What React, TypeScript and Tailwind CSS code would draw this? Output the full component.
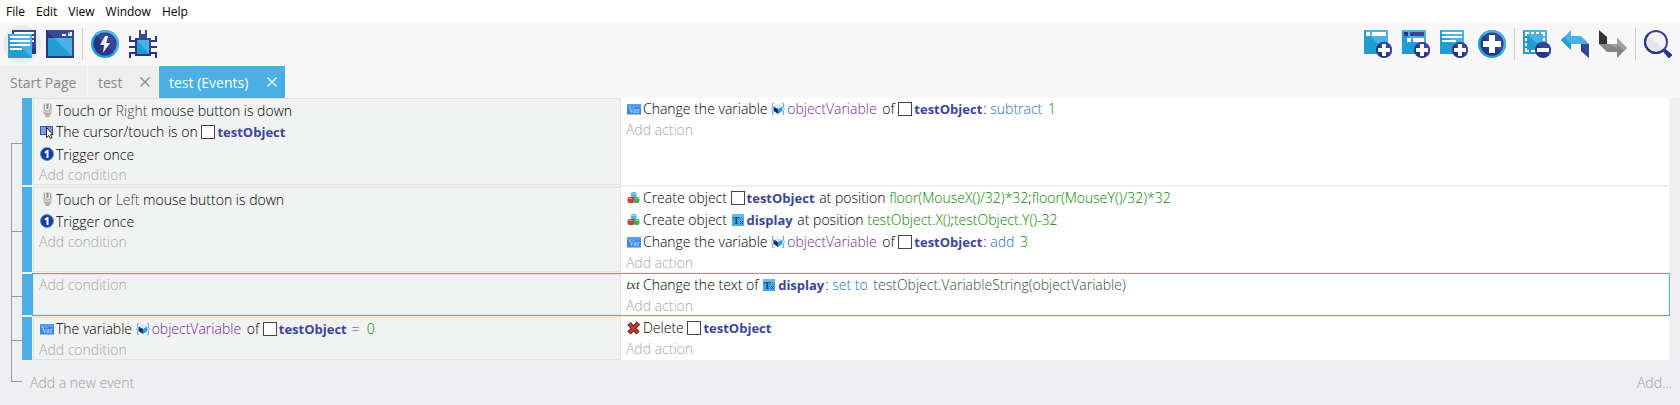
import type { ReactNode } from "react";

const LIGHT = "#4bb0e4";
const BLUE = "#219dd4";
const INDIGO = "#3c4698";
const NAVY = "#283583";

/* ---------- toolbar icons ---------- */

function Svg({ children }: { children: ReactNode }) {
  return (
    <svg width="28" height="28" viewBox="0 0 28 28" aria-hidden="true">
      {children}
    </svg>
  );
}

function Sheet() {
  return (
    <>
      <path d="M0 0h24v24H0z" fill={BLUE} />
      <path d="M0 0h24v24z" fill={LIGHT} />
    </>
  );
}

function Badge({ minus = false }: { minus?: boolean }) {
  return (
    <>
      <circle cx="20" cy="20" r="8" fill={NAVY} />
      <path d="M14.3 14.3A8 8 0 0 1 25.7 25.7z" fill={INDIGO} />
      <path d={minus ? "M14 18h12v4H14z" : "M18 14h4v4h4v4h-4v4h-4v-4h-4v-4h4z"} fill="#fff" />
    </>
  );
}

function Disc() {
  return (
    <>
      <circle cx="14" cy="14" r="14" fill={BLUE} />
      <path d="M4.1 4.1A14 14 0 0 1 23.9 23.9z" fill={LIGHT} />
      <circle cx="14" cy="14" r="11.5" fill={NAVY} />
      <path d="M5.9 5.9A11.5 11.5 0 0 1 22.1 22.1z" fill={INDIGO} />
    </>
  );
}

const EventsIcon = () => (
  <Svg>
    <path d="M4 0h24v24H4z" fill={INDIGO} />
    <path d="M24 20l4-4v8h-4z" fill={NAVY} />
    <path d="M6 2h20v2H6zM24 6h2v2h-2zM24 10h2v2h-2z" fill="#fff" />
    <path d="M0 4h24v24H0z" fill={BLUE} />
    <path d="M0 4h24v24z" fill={LIGHT} />
    <path d="M2 6h20v2H2zM2 10h20v2H2zM2 14h20v2H2zM2 18h12v2H2z" fill="#fff" />
  </Svg>
);

const SceneIcon = () => (
  <Svg>
    <path d="M0 0h28v28H0z" fill={NAVY} />
    <path d="M0 0h28v28z" fill={INDIGO} />
    <path d="M2 8h24v18H2z" fill={BLUE} />
    <path d="M8 8h18v18z" fill={LIGHT} />
    <path d="M16 4h4v2h-4zM22 2h4v4h-4z" fill="#fff" />
    <path d="M22 2h2v2h-2zM24 4h1v1h-1z" fill={LIGHT} />
  </Svg>
);

const BoltIcon = () => (
  <Svg>
    <Disc />
    <path d="M14 6l-5 9h4l-1 8 7-10h-4l2-7z" fill="#e8e8f0" />
    <path d="M14 6h3l-2 7h4l-4 5z" fill="#fff" />
  </Svg>
);

const BugIcon = () => (
  <Svg>
    <path d="M6 8h4V0h2v4h4V0h2v8h4v18H6z" fill={NAVY} />
    <path d="M10 8V0h2v4h4V0h2v8h4v14L8 8z" fill={INDIGO} />
    <path d="M1 6v5h5M0 17h6M1 28v-5h5M27 6v5h-5M28 17h-6M27 28v-5h-5" fill="none" stroke={NAVY} strokeWidth="2" />
    <path d="M8 10h12v14H8z" fill={BLUE} />
    <path d="M8 10h12v14z" fill={LIGHT} />
  </Svg>
);

const AddEventIcon = () => (
  <Svg>
    <Sheet />
    <path d="M2 2h4v4H2zM8 2h14v4H8z" fill="#fff" />
    <Badge />
  </Svg>
);

const AddSubEventIcon = () => (
  <Svg>
    <Sheet />
    <path d="M2 2h4v4H2z" fill={NAVY} />
    <path d="M8 2h14v4H8z" fill={INDIGO} />
    <path d="M5 8h4v4H5zM11 8h11v4H11z" fill="#fff" />
    <Badge />
  </Svg>
);

const AddCommentIcon = () => (
  <Svg>
    <Sheet />
    <path d="M2 2h20v2H2zM2 6h20v2H2zM2 10h14v2H2z" fill="#fff" />
    <Badge />
  </Svg>
);

const AddIcon = () => (
  <Svg>
    <Disc />
    <path d="M11 5h6v6h6v6h-6v6h-6v-6H5v-6h6z" fill="#fff" />
  </Svg>
);

const DeleteIcon = () => (
  <Svg>
    <Sheet />
    <path
      d="M2 2h4v2H4v2H2zM8 2h3v2H8zM13 2h3v2h-3zM18 2h4v4h-2V4h-2zM2 8h2v3H2zM2 13h2v3H2zM20 8h2v3h-2zM2 18h2v2h2v2H2zM8 20h4v2H8z"
      fill="#fff"
    />
    <Badge minus />
  </Svg>
);

const UndoIcon = () => (
  <Svg>
    <path d="M0 10L10 0v6h10l8 8H10v6z" fill={LIGHT} />
    <path d="M0 10l3-3 7 7v6z" fill={BLUE} />
    <path d="M20 14h8v14l-8-7z" fill={INDIGO} />
    <path d="M20 14l8 14-8-7z" fill={NAVY} opacity="0.4" />
  </Svg>
);

const RedoIcon = () => (
  <Svg>
    <path d="M0 0l8 7v7H0z" fill="#333" />
    <path d="M0 14h18V8l10 10-10 10v-6H8z" fill="#868686" />
    <path d="M10 14h8V8l10 10-3 3-7-7v4z" fill="#a0a0a0" />
  </Svg>
);

const SearchIcon = () => (
  <Svg>
    <path d="M18.5 20.5l2-2 7.5 6.5-3 3z" fill={NAVY} stroke={NAVY} />
    <circle cx="12" cy="12" r="11" fill="#e6e6ea" />
    <path d="M4.2 4.2A11 11 0 0 1 19.8 19.8z" fill="#f5f5f7" />
    <circle cx="12" cy="12" r="11" fill="none" stroke={INDIGO} strokeWidth="2" />
    <path d="M4.2 4.2A11 11 0 0 0 19.8 19.8" fill="none" stroke={NAVY} strokeWidth="2" />
  </Svg>
);

function ToolButton({ label, active = false, children }: { label: string; active?: boolean; children: ReactNode }) {
  return (
    <button
      type="button"
      aria-label={label}
      className={
        active
          ? "flex size-[38px] items-center justify-center rounded-full bg-[#ebebeb]"
          : "flex size-[38px] items-center justify-center rounded-full"
      }
    >
      {children}
    </button>
  );
}

const Divider = () => <div className="mx-[3px] h-8 w-px bg-[#cccccc]" />;

/* ---------- instruction icons ---------- */

function SmallSvg({ children }: { children: ReactNode }) {
  return (
    <svg className="mr-px size-4 shrink-0" viewBox="0 0 16 16" aria-hidden="true">
      {children}
    </svg>
  );
}

const MouseIcon = () => (
  <SmallSvg>
    <path d="M4 2q5-2 9 0v7q0 5-4.500 6Q4 14 4 9z" fill="#cfcfcf" />
    <path d="M5.500 2.500v5q3 3 6 0v-5" fill="#f4f4f4" stroke="#a5a5a5" />
    <path d="M7.500 2h2v5h-2z" fill="#888" />
    <path d="M5 10q3.500 3 7 0-1 3-3.500 3T5 10z" fill="#a0a0a0" />
    <path d="M6.500 13h4v2h-4z" fill="#e89a90" />
  </SmallSvg>
);

const CursorIcon = () => (
  <SmallSvg>
    <path d="M1.500 2.500h12v8h-12z" fill="#7f9be4" stroke="#3a4ba5" />
    <path d="M7.500 3.500v10l2.300-2 1.600 3.200 1.600-.8-1.500-3.200H14z" fill="#fff" stroke="#222" />
  </SmallSvg>
);

const OnceIcon = () => (
  <SmallSvg>
    <circle cx="8" cy="8" r="6.500" fill="#203a93" stroke="#3a9fd8" />
    <path d="M5.500 6L8 4h1.500v8h-2V6.500L6 7.500z" fill="#fff" />
  </SmallSvg>
);

const VarIcon = () => (
  <SmallSvg>
    <path d="M1 3h14v10.500H1z" fill="#3f87e0" />
    <path d="M1 3h14v3H1z" fill="#5a9cec" />
    <text x="8" y="11.500" textAnchor="middle" fontFamily="Liberation Serif, serif" fontSize="8" fill="#cfe4ff">
      Var
    </text>
  </SmallSvg>
);

const CreateIcon = () => (
  <SmallSvg>
    <rect x="5" y="2" width="5.500" height="6" rx="2" fill="#56b0ec" />
    <rect x="1.500" y="7" width="7" height="6" rx="2" fill="#d8343c" />
    <rect x="7.500" y="7" width="6" height="6" rx="2" fill="#3fae49" />
    <path d="M6 3h3v1H6zM3 8h3v1H3zM9.500 8h3v1h-3z" fill="#fff" opacity="0.5" />
  </SmallSvg>
);

const TextActionIcon = () => (
  <SmallSvg>
    <text x="7" y="12" textAnchor="middle" fontFamily="Liberation Serif, serif" fontStyle="italic" fontSize="13" fill="#333">
      txt
    </text>
  </SmallSvg>
);

const CrossIcon = () => (
  <SmallSvg>
    <path d="M3 3.500l9 9.500M12.500 3L3 13" stroke="#5e1d18" strokeWidth="4.500" />
    <path d="M3 3.500l9 9.500M12.500 3L3 13" stroke="#c8402c" strokeWidth="2.500" />
  </SmallSvg>
);

const inlineIcon = "mr-0.5 inline-block size-[14px] align-[-2px]";

/* ---------- instruction parts ---------- */

const Param = ({ children }: { children: ReactNode }) => <span className="text-[#444444]">{children}</span>;
const Expr = ({ children }: { children: ReactNode }) => <span className="text-[#0b8500]">{children}</span>;
const Op = ({ children }: { children: ReactNode }) => <span className="mr-0.5 text-[#1a70cc]">{children}</span>;

const Obj = ({ name }: { name: string }) => (
  <span className="mr-px text-[13px] font-bold text-[#3c4698]">
    <span className="mr-0.5 inline-block size-[14px] border border-[#444444] bg-white align-[-2px]" />
    {name}
  </span>
);

const TextObj = ({ name }: { name: string }) => (
  <span className="mr-px text-[13px] font-bold text-[#3c4698]">
    <svg className={inlineIcon} viewBox="0 0 14 14" aria-hidden="true">
      <path d="M1 1h12v12H1z" fill="#3fa9e0" />
      <path d="M1 1h12v3H1z" fill="#63bdec" />
      <text x="2" y="11" fontFamily="Liberation Serif, serif" fontWeight="700" fontSize="10" fill="#1f3f86">
        T
      </text>
      <path d="M9 8l3 3M12 8l-3 3" stroke="#1f3f86" />
    </svg>
    {name}
  </span>
);

const Variable = ({ name }: { name: string }) => (
  <span className="mr-0.5 text-[#7a1f9c]">
    <svg className={inlineIcon} viewBox="0 0 14 14" aria-hidden="true">
      <path d="M3 1.500H1.500v4L.5 7l1 1.500v4H3M11 1.500h1.500v4l1 1.500-1 1.500v4H11" fill="none" stroke="#5cb8e8" />
      <path d="M2.500 4.500L7 2l4.500 2.500L7 7z" fill="#dfe6ee" />
      <path d="M2.500 4.500L7 7v5L2.500 9z" fill="#1c2a72" />
      <path d="M11.500 4.500L7 7v5l4.500-3z" fill="#2f9fdc" />
    </svg>
    {name}
  </span>
);

function Line({ icon, children }: { icon: ReactNode; children: ReactNode }) {
  return (
    <div className="flex h-[22px] items-center whitespace-pre pl-[5px] text-black">
      {icon}
      <span>{children}</span>
    </div>
  );
}

function AddLink({ children }: { children: ReactNode }) {
  return (
    <button type="button" className="block h-[19px] pl-[5px] text-left leading-5 text-[#a8a8a8]">
      {children}
    </button>
  );
}

type EventRowProps = {
  first?: boolean;
  selected?: boolean;
  conditions?: ReactNode;
  actions: ReactNode;
};

function EventRow({ first = false, selected = false, conditions, actions }: EventRowProps) {
  return (
    <div className="flex">
      <div className="w-[22px] shrink-0 pl-[11px]">
        <div
          className={
            first
              ? "h-[calc(50%+1px)] border-b border-[#999999]"
              : "h-[calc(50%+1px)] border-b border-l border-[#999999]"
          }
        />
        <div className="h-[calc(50%-1px)] border-l border-[#999999]" />
      </div>
      <div className="mb-0.5 mr-px w-2.5 shrink-0 bg-[#4ab0e4]" />
      <div
        className={
          selected
            ? "mb-0.5 mr-[11px] flex flex-1 bg-white outline outline-[#4ab0e4]"
            : "mb-0.5 mr-[11px] flex flex-1 bg-white"
        }
      >
        <div className="w-[calc(36%-1px)] shrink-0 border border-[#e0e2e2] bg-[#f1f2f2]">
          {conditions}
          <AddLink>Add condition</AddLink>
        </div>
        <div className="flex-1">
          {actions}
          <AddLink>Add action</AddLink>
        </div>
      </div>
    </div>
  );
}

function CloseButton() {
  return (
    <button type="button" aria-label="Close tab" className="px-2">
      <svg width="10" height="10" viewBox="0 0 10 10" aria-hidden="true">
        <path d="M.5.5l9 9M9.500.5l-9 9" stroke="currentColor" strokeWidth="1.200" />
      </svg>
    </button>
  );
}

export default function App() {
  return (
    <div className="min-h-screen bg-[#efeff1] font-['Open_Sans','Noto_Sans',sans-serif]">
      <nav className="flex h-[22px] items-center gap-[11px] bg-white pl-1.5 pt-0.5 text-xs text-black">
        {["File", "Edit", "View", "Window", "Help"].map((item) => (
          <button key={item} type="button">
            {item}
          </button>
        ))}
      </nav>

      <header className="flex items-center justify-between bg-[#f7f7f7] p-[3px]">
        <div className="flex items-center">
          <ToolButton label="Events" active>
            <EventsIcon />
          </ToolButton>
          <ToolButton label="Scene">
            <SceneIcon />
          </ToolButton>
          <Divider />
          <ToolButton label="Preview">
            <BoltIcon />
          </ToolButton>
          <ToolButton label="Debug">
            <BugIcon />
          </ToolButton>
        </div>
        <div className="flex items-center">
          <ToolButton label="Add an event">
            <AddEventIcon />
          </ToolButton>
          <ToolButton label="Add a sub-event">
            <AddSubEventIcon />
          </ToolButton>
          <ToolButton label="Add a comment">
            <AddCommentIcon />
          </ToolButton>
          <ToolButton label="Add another event">
            <AddIcon />
          </ToolButton>
          <Divider />
          <ToolButton label="Delete">
            <DeleteIcon />
          </ToolButton>
          <ToolButton label="Undo">
            <UndoIcon />
          </ToolButton>
          <ToolButton label="Redo">
            <RedoIcon />
          </ToolButton>
          <Divider />
          <ToolButton label="Search">
            <SearchIcon />
          </ToolButton>
        </div>
      </header>

      <div className="flex h-8 gap-px bg-[#f7f7f7] text-sm text-[#888888]">
        <button type="button" className="w-[87px] bg-[#eeeeee] pl-2.5 pt-0.5 text-left">
          Start Page
        </button>
        <div className="flex w-[70px] justify-between bg-[#eeeeee] pl-2.5">
          <button type="button" className="pt-0.5">
            test
          </button>
          <CloseButton />
        </div>
        <div className="flex w-[126px] justify-between bg-[#4ab0e4] pl-2.5 text-white">
          <button type="button" className="pt-0.5">
            test (Events)
          </button>
          <CloseButton />
        </div>
      </div>

      <main className="text-[14px] font-[350]">
        <EventRow
          first
          conditions={
            <>
              <Line icon={<MouseIcon />}>
                Touch or <Param>Right</Param> mouse button is down
              </Line>
              <Line icon={<CursorIcon />}>
                The cursor/touch is on <Obj name="testObject" />
              </Line>
              <Line icon={<OnceIcon />}>Trigger once</Line>
            </>
          }
          actions={
            <Line icon={<VarIcon />}>
              Change the variable <Variable name="objectVariable" /> of <Obj name="testObject" />: <Op>subtract</Op>{" "}
              <Expr>1</Expr>
            </Line>
          }
        />
        <EventRow
          conditions={
            <>
              <Line icon={<MouseIcon />}>
                Touch or <Param>Left</Param> mouse button is down
              </Line>
              <Line icon={<OnceIcon />}>Trigger once</Line>
            </>
          }
          actions={
            <>
              <Line icon={<CreateIcon />}>
                Create object <Obj name="testObject" /> at position <Expr>floor(MouseX()/32)*32</Expr>;
                <Expr>floor(MouseY()/32)*32</Expr>
              </Line>
              <Line icon={<CreateIcon />}>
                Create object <TextObj name="display" /> at position <Expr>testObject.X()</Expr>;
                <Expr>testObject.Y()-32</Expr>
              </Line>
              <Line icon={<VarIcon />}>
                Change the variable <Variable name="objectVariable" /> of <Obj name="testObject" />: <Op>add</Op>{" "}
                <Expr>3</Expr>
              </Line>
            </>
          }
        />
        <EventRow
          selected
          actions={
            <Line icon={<TextActionIcon />}>
              Change the text of <TextObj name="display" />: <Op>set to</Op>{" "}
              <Param>testObject.VariableString(objectVariable)</Param>
            </Line>
          }
        />
        <EventRow
          conditions={
            <Line icon={<VarIcon />}>
              The variable <Variable name="objectVariable" /> of <Obj name="testObject" />
              <Param> = </Param> <Expr>0</Expr>
            </Line>
          }
          actions={
            <Line icon={<CrossIcon />}>
              Delete <Obj name="testObject" />
            </Line>
          }
        />

        <div className="flex h-10 text-[#a0a0a0]">
          <div className="w-[22px] shrink-0 pl-[11px]">
            <div className="h-5 border-b border-l border-[#999999]" />
          </div>
          <div className="flex flex-1 items-center justify-between pl-2 pr-2">
            <button type="button">Add a new event</button>
            <button type="button">Add...</button>
          </div>
        </div>
      </main>
    </div>
  );
}
